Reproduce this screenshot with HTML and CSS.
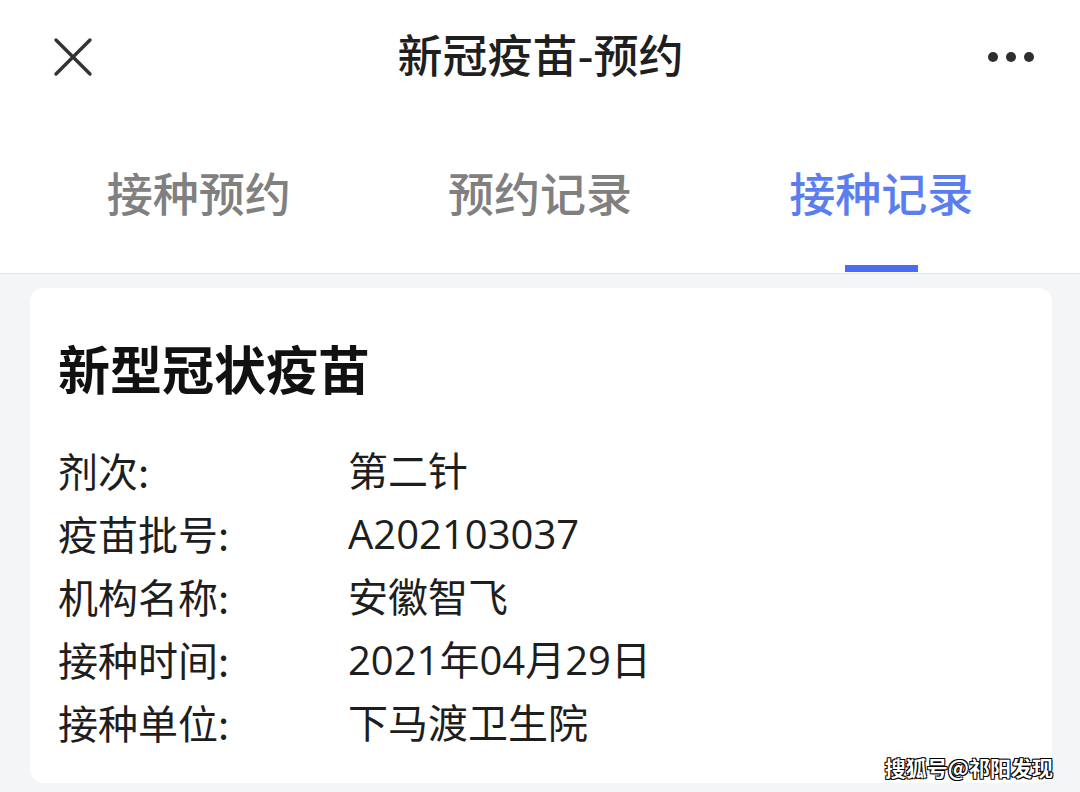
FILE: index.html
```html
<!DOCTYPE html>
<html lang="zh-CN">

<head>
    <meta charset="UTF-8">
    <meta name="viewport" content="width=device-width, initial-scale=1.0">
    <title>新冠疫苗-预约</title>
    <link rel="stylesheet" href="styles.css">
</head>

<body>
    <div class="page">
        <!-- Top navigation bar -->
        <div class="nav-bar">
            <button class="nav-close" type="button" aria-label="关闭">
                <svg width="40" height="40" viewBox="0 0 40 40">
                    <path d="M3 3 L37 37 M37 3 L3 37" stroke="#333" stroke-width="3.4" stroke-linecap="round" fill="none" />
                </svg>
            </button>
            <h1 class="nav-title">新冠疫苗-预约</h1>
            <button class="nav-more" type="button" aria-label="更多">
                <span class="dot"></span>
                <span class="dot"></span>
                <span class="dot"></span>
            </button>
        </div>

        <!-- Tabs -->
        <div class="tabs">
            <div class="tab">
                <span class="tab-label">接种预约</span>
                <span class="tab-bar"></span>
            </div>
            <div class="tab">
                <span class="tab-label">预约记录</span>
                <span class="tab-bar"></span>
            </div>
            <div class="tab active">
                <span class="tab-label">接种记录</span>
                <span class="tab-bar"></span>
            </div>
        </div>

        <!-- Record list -->
        <div class="content">
            <div class="record-card">
                <h2 class="record-title">新型冠状疫苗</h2>
                <div class="record-rows">
                    <div class="row-label">剂次:</div>
                    <div class="row-value">第二针</div>
                    <div class="row-label">疫苗批号:</div>
                    <div class="row-value">A202103037</div>
                    <div class="row-label">机构名称:</div>
                    <div class="row-value">安徽智飞</div>
                    <div class="row-label">接种时间:</div>
                    <div class="row-value">2021年04月29日</div>
                    <div class="row-label">接种单位:</div>
                    <div class="row-value">下马渡卫生院</div>
                </div>
            </div>
        </div>

        <div class="watermark">搜狐号@祁阳发现</div>
    </div>
</body>

</html>
```

FILE: styles.css
```css
/* Page base */
body {
    margin: 0;
    background-color: #f4f5f7;
    font-family: "Noto Sans CJK SC", "Noto Sans", sans-serif;
    color: #1c1c1c;
}

.page {
    position: relative;
    width: 1080px;
    height: 792px;
    overflow: hidden;
    background-color: #f4f5f7;
}

/* Navigation bar */
.nav-bar {
    height: 114px;
    display: flex;
    align-items: center;
    justify-content: space-between;
    padding: 0 46px 0 53px;
    background-color: #fff;
}

.nav-close {
    width: 40px;
    height: 40px;
    padding: 0;
    border: none;
    background: none;
    display: flex;
}

.nav-title {
    margin: 0 0 6px;
    font-size: 45px;
    font-weight: 500;
    line-height: 60px;
    color: #1f1f1f;
}

.nav-more {
    width: 46px;
    height: 12px;
    padding: 0;
    border: none;
    background: none;
    display: flex;
    align-items: center;
    justify-content: space-between;
}

.nav-more .dot {
    width: 10px;
    height: 10px;
    border-radius: 50%;
    background-color: #2e2e2e;
}

/* Tabs */
.tabs {
    display: grid;
    grid-template-columns: repeat(3, 1fr);
    height: 159px;
    padding: 0 28px;
    background-color: #fff;
    border-bottom: 1px solid #e3e4e6;
}

.tab {
    display: flex;
    flex-direction: column;
    align-items: center;
}

.tab-label {
    margin-top: 47px;
    font-size: 46px;
    font-weight: 500;
    line-height: 60px;
    color: #808080;
}

.tab-bar {
    margin-top: auto;
    width: 73px;
    height: 7px;
    margin-bottom: 1px;
}

.tab.active .tab-label {
    color: #5a7ef0;
}

.tab.active .tab-bar {
    background-color: #4a6cf5;
}

/* Record card */
.content {
    padding: 14px 28px 0 30px;
}

.record-card {
    background-color: #fff;
    border-radius: 14px;
    padding: 49px 28px 29px;
}

.record-title {
    margin: 0;
    font-size: 52px;
    font-weight: 700;
    line-height: 62px;
    color: #111;
}

.record-rows {
    display: grid;
    grid-template-columns: 290px 1fr;
    margin-top: 40px;
    font-size: 40px;
    line-height: 63px;
    color: #1e1e1e;
}

.row-value {
    font-family: "Open Sans", "Noto Sans CJK SC", sans-serif;
}

/* Watermark overlay */
.watermark {
    position: absolute;
    right: 27px;
    bottom: 10px;
    font-size: 21px;
    font-weight: 700;
    color: #fff;
    text-shadow: 1px 1px 0 #000, -1px -1px 0 #000, 1px -1px 0 #000, -1px 1px 0 #000;
}
```
